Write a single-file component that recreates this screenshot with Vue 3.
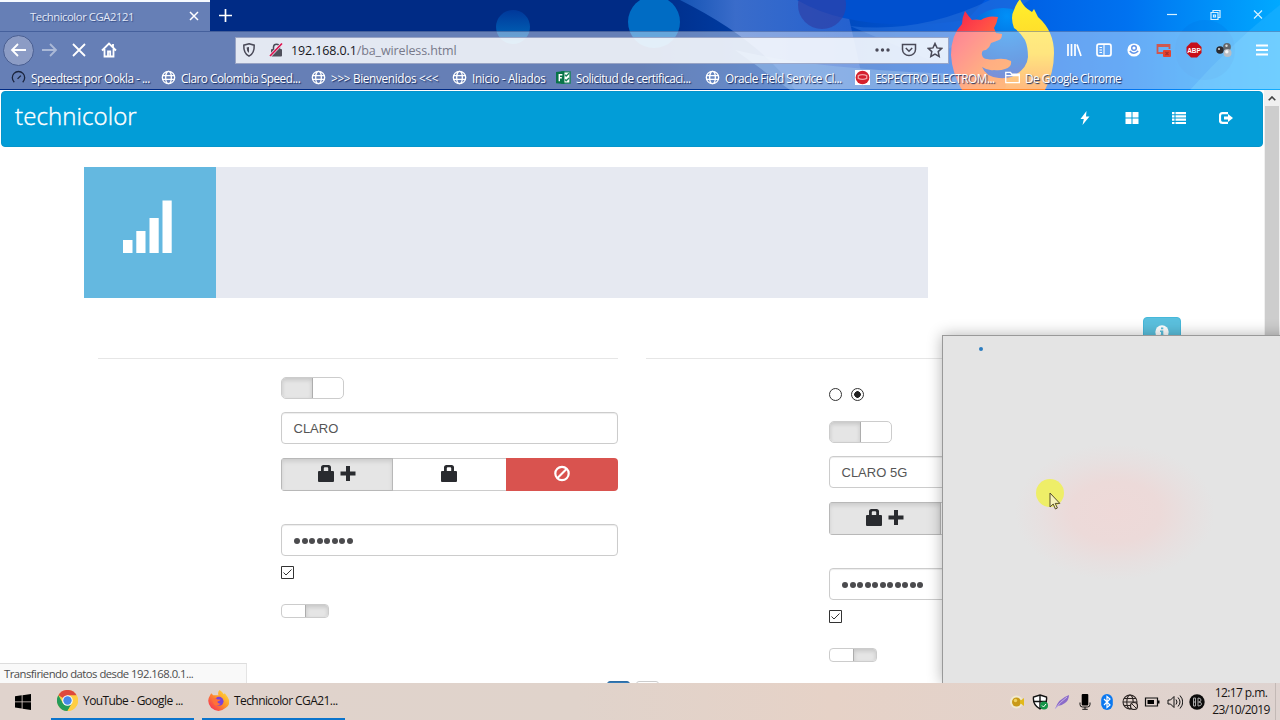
<template>
  <div class="desktop">
    <header class="browser">
      <svg class="wallpaper" viewBox="0 0 1280 90" aria-hidden="true">
        <defs>
          <linearGradient id="sky" x1="0" y1="0" x2="1" y2="0">
            <stop offset="0" stop-color="#002b85" />
            <stop offset=".5" stop-color="#002b85" />
            <stop offset=".62" stop-color="#0045b2" />
            <stop offset=".76" stop-color="#0058df" />
            <stop offset=".88" stop-color="#0072f0" />
            <stop offset="1" stop-color="#00a9ff" />
          </linearGradient>
          <linearGradient id="beam" x1="0" y1="0" x2="1" y2="0">
            <stop offset="0" stop-color="#1554b4" />
            <stop offset=".3" stop-color="#3a6cca" />
            <stop offset="1" stop-color="#2260d0" />
          </linearGradient>
          <linearGradient id="bubble" x1="0" y1="0" x2="0" y2="1">
            <stop offset="0" stop-color="#00389a" />
            <stop offset="1" stop-color="#006cbc" />
          </linearGradient>
          <linearGradient id="body" x1="0" y1="0" x2="1" y2="1">
            <stop offset="0" stop-color="#f3204b" />
            <stop offset=".3" stop-color="#ff4a48" />
            <stop offset=".6" stop-color="#ff7a30" />
            <stop offset="1" stop-color="#ff8f24" />
          </linearGradient>
          <linearGradient id="tail" x1="0" y1="0" x2="0" y2="1">
            <stop offset="0" stop-color="#fff02c" />
            <stop offset=".6" stop-color="#ffd42b" />
            <stop offset="1" stop-color="#ff8a2c" />
          </linearGradient>
          <radialGradient id="globe" cx=".55" cy=".1" r=".95">
            <stop offset="0" stop-color="#0090f8" />
            <stop offset=".6" stop-color="#075bd0" />
            <stop offset="1" stop-color="#4530a8" />
          </radialGradient>
        </defs>
        <rect width="1280" height="90" fill="url(#sky)" />
        <path d="M680 0h165l20 90H795Q760 40 680 0z" fill="url(#beam)" />
        <path d="M735 50q90 22 260 25v15H790z" fill="#4f8ed8" opacity=".6" />
        <path d="M797 0q60 35 170 20L985 0z" fill="#0050cf" />
        <path d="M850 26q70 8 140-26h40L930 60z" fill="#2a72dc" opacity=".5" />
        <path d="M1190 90q45-50 90-85v85z" fill="#22b2ff" opacity=".5" />
        <circle cx="513" cy="27" r="17" fill="url(#bubble)" />
        <circle cx="654" cy="22" r="26" fill="#006cc4" />
        <circle cx="822" cy="5" r="24" fill="#2d40a8" opacity=".7" />
        <circle cx="1205" cy="50" r="30" fill="#0068d8" opacity=".15" />
        <circle cx="1003" cy="49" r="41" fill="url(#globe)" />
        <path
          d="M965 11q4 6 7 9 4-1 9 0 7-5 17-3-1 6-4 11l2 5 6 1q0 5-3 6-5 2-8 3-1 4-5 7-5 0-4 5 1 4 5 4 5 1 10 0 8-1 14 2 1 6-6 8-5 2-11 1-6 1-12-3 4 10 17 11 14 1 25-6v18h-62q-10-17-11-35 0-20 11-31 0-6 3-13z"
          fill="url(#body)"
        />
        <path
          d="M1020-1q3 8 12 13l2-3 4 8q16 14 16 36 0 20-9 37h-40l2-11q20-8 21-22 0-10-3-17-4-7-11-12-4-11 0-18 2-6 6-11z"
          fill="url(#tail)"
        />
      </svg>

      <div class="tab-strip">
        <div class="tab">
          <span class="tab-title">Technicolor CGA2121</span>
          <svg class="tab-close" viewBox="0 0 10 10"><path d="M1 1l8 8M9 1L1 9" /></svg>
        </div>
        <svg class="tab-new" viewBox="0 0 13 13"><path d="M6.500 0v13M0 6.500h13" /></svg>
        <div class="window-controls">
          <svg viewBox="0 0 12 12"><path d="M1 5.500h10" /></svg>
          <svg viewBox="0 0 12 12"><path d="M2 3.500h7v7H2zM4 3V1.500h7v7H9.500M4.500 6h2v2h-2z" /></svg>
          <svg viewBox="0 0 12 12"><path d="M2 1.500l8 8M10 1.500l-8 8" /></svg>
        </div>
      </div>

      <div class="nav-bar">
        <button class="nav-back" type="button">
          <svg viewBox="0 0 18 18"><path d="M16 9H2M8 3L2 9l6 6" /></svg>
        </button>
        <svg class="nav-icon nav-icon--dim" viewBox="0 0 18 18"><path d="M2 9h14M10 3l6 6-6 6" /></svg>
        <svg class="nav-icon" viewBox="0 0 18 18"><path d="M3 3l12 12M15 3L3 15" /></svg>
        <svg class="nav-icon" viewBox="0 0 18 18">
          <path d="M2 9.500l7-7 7 7M4.500 8v7.500h9V8M8 15v-4.500h2.200V15M13 3v3" />
        </svg>
        <div class="url-bar">
          <svg class="url-icon" viewBox="0 0 16 16">
            <path d="M8 1.800l5.200 1.400q.4 8-5.200 11-5.600-3-5.200-11z" />
            <path d="M8 5v6q-2.500-2-2.400-5.500z" fill="#4a4a58" stroke="none" />
          </svg>
          <svg class="url-icon" viewBox="0 0 16 16">
            <rect x="3" y="7" width="11" height="7.500" rx="1" fill="#50505c" stroke="none" />
            <path d="M5.500 7V5q.2-2.700 3-2.700T11.500 5v2" />
            <path d="M2 14L14 1.500" stroke="#eceff8" stroke-width="3" />
            <path d="M2 14L14 1.500" stroke="#dc1450" stroke-width="1.800" />
          </svg>
          <span class="url-text">192.168.0.1<em>/ba_wireless.html</em></span>
          <svg class="url-icon" viewBox="0 0 16 16">
            <g fill="#4a4a58" stroke="none">
              <circle cx="3" cy="8" r="1.700" /><circle cx="8.500" cy="8" r="1.700" /><circle cx="14" cy="8" r="1.700" />
            </g>
          </svg>
          <svg class="url-icon" viewBox="0 0 16 16">
            <path d="M1.500 2.500h13v5a6.500 6 0 0 1-13 0zM4.800 6L8 9.200 11.200 6" />
          </svg>
          <svg class="url-icon" viewBox="0 0 16 16">
            <path d="M8 1.500l2 4.400 4.700.5-3.500 3.200 1 4.800L8 12l-4.200 2.400 1-4.800L1.300 6.400 6 5.900z" />
          </svg>
        </div>
        <div class="toolbar-icons">
          <svg viewBox="0 0 16 16"><path d="M2 2v12M5.500 2v12M9 2v12M11 2.500l4 11.500" stroke-width="1.700" /></svg>
          <svg viewBox="0 0 16 16">
            <rect x="1" y="2.200" width="14" height="11.600" rx="2" stroke-width="1.700" />
            <path d="M8 2.500v11M3.500 5.500h2.500M3.500 8h2.500M3.500 10.500h2.500" />
          </svg>
          <svg viewBox="0 0 16 16">
            <circle cx="8" cy="8" r="6.600" fill="#fff" stroke="none" />
            <circle cx="8" cy="6" r="2.300" fill="#fff" stroke="#5f92e8" stroke-width="1.400" />
            <path d="M3.800 9q4 4.500 8.400 0" stroke="#5f92e8" stroke-width="1.500" />
          </svg>
          <svg viewBox="0 0 16 16">
            <path d="M7 11H1.500V3h12v4M1.500 4h12" stroke="#d0584f" stroke-width="1.800" />
            <rect x="7" y="8" width="8" height="7" rx="1" fill="#e5432f" stroke="none" />
            <path d="M9.500 10l3 3M12.500 10l-3 3" stroke="#a8302e" />
          </svg>
          <svg viewBox="0 0 16 16">
            <path d="M5 .5h6L15.500 5v6L11 15.500H5L.5 11V5z" fill="#c70d18" stroke="none" />
            <text x="8" y="10.600" text-anchor="middle">ABP</text>
          </svg>
          <svg viewBox="0 0 16 16">
            <g stroke="none">
              <circle cx="11" cy="5" r="3.900" fill="#63676c" />
              <circle cx="4" cy="8" r="3.800" fill="#2b2b31" />
              <circle cx="11.500" cy="11" r="4" fill="#b9bdc4" />
              <circle cx="3" cy="7" r="1" fill="#ddd" /><circle cx="10.500" cy="3.800" r="1.200" fill="#ddd" />
              <circle cx="10.800" cy="9.800" r="1.700" fill="#f4f5f6" />
            </g>
          </svg>
        </div>
        <svg class="menu-icon" viewBox="0 0 12 12"><path d="M0 1.500h12M0 6h12M0 10.500h12" /></svg>
      </div>

      <nav class="bookmarks">
        <a v-for="mark in bookmarks" :key="mark.label" class="bookmark">
          <svg v-if="mark.icon === 'globe'" viewBox="0 0 16 16">
            <circle cx="8" cy="8" r="6.600" />
            <path d="M1.500 6h13M1.500 10h13" />
            <ellipse cx="8" cy="8" rx="3" ry="6.600" />
          </svg>
          <svg v-else-if="mark.icon === 'gauge'" viewBox="0 0 16 16" class="icon-gauge">
            <path d="M3.500 13a6.600 6.600 0 1 1 9 0M7 9.500L10.500 6" />
          </svg>
          <svg v-else-if="mark.icon === 'forms'" viewBox="0 0 16 16">
            <path d="M6 2h9v12H6z" fill="#fff" stroke="#168358" stroke-width="1.500" />
            <path d="M9.500 5l1.300 1.500L14 3.500M9.500 10l1.300 1.500L14 8.500" stroke="#168358" />
            <path d="M0 2l9-1v14l-9-1z" fill="#087448" stroke="none" />
            <path d="M3.500 12V5h3.300M3.500 8.300h2.700" stroke-width="1.500" />
          </svg>
          <svg v-else-if="mark.icon === 'badge'" viewBox="0 0 16 16">
            <path d="M0 0h16v16H0z" fill="#fff" stroke="none" />
            <circle cx="8" cy="8" r="7.300" fill="#d5212d" stroke="none" />
            <path d="M3.500 6q4.500-2 9 0v3q-4.500 2-9 0z" stroke="#f2a3a5" />
          </svg>
          <svg v-else viewBox="0 0 16 16"><path d="M.8 13.500v-11h5l1.500 2h8v9zM.8 6h14.400" /></svg>
          <span>{{ mark.label }}</span>
        </a>
      </nav>
    </header>

    <div class="viewport">
      <div class="page">
        <div class="brand-bar">
          <span class="brand">technicolor</span>
          <div class="brand-icons">
            <svg viewBox="0 0 14 14"><path d="M8.500 0L2.500 8h3.300L4.500 14 11.500 5.500H8z" /></svg>
            <svg viewBox="0 0 14 14"><path d="M.5 1h6v5.500h-6zM7.500 1h6v5.500h-6zM.5 7.500h6V13h-6zM7.500 7.500h6V13h-6z" /></svg>
            <svg viewBox="0 0 14 14">
              <path d="M0 1h2.500v2.200H0zM3.500 1H14v2.200H3.500zM0 4.300h2.500v2.200H0zM3.500 4.300H14v2.200H3.500zM0 7.600h2.500v2.200H0zM3.500 7.600H14v2.200H3.500zM0 10.900h2.500V13H0zM3.500 10.900H14V13H3.500z" />
            </svg>
            <svg viewBox="0 0 14 14">
              <path d="M9 2.200H3.500Q1 2.200 1 4.700v4.600q0 2.500 2.500 2.500H9" fill="none" stroke="#fff" stroke-width="2.200" />
              <path d="M5 5.500h4V3l5 4-5 4V8.500H5z" />
            </svg>
          </div>
        </div>

        <div class="banner">
          <div class="banner-icon">
            <svg viewBox="0 0 50 54"><path d="M0 40h9.500v13H0zM13.300 31h9.200v22h-9.200zM26.500 18h9.200v35h-9.200zM39.500.500h9.200V53h-9.200z" /></svg>
          </div>
        </div>

        <div class="info-row">
          <button class="info-btn" type="button">
            <svg viewBox="0 0 14 14">
              <circle cx="7" cy="7" r="6.700" fill="#fff" />
              <path d="M6 2.500h2.300v1.800H6zM5 5.500h3.300v4.300h1v1.400H5V9.800h1V7H5z" fill="#5bc0de" />
            </svg>
          </button>
        </div>

        <div class="bands">
          <section v-for="band in bands" :key="band.ssid" class="band">
            <div class="band-form">
              <div v-if="band.radios" class="radios">
                <span class="radio" /><span class="radio radio--on" />
              </div>
              <div class="switch"><span class="pressed" /><span /></div>
              <div class="field">{{ band.ssid }}</div>
              <div class="security">
                <span class="pressed">
                  <svg class="lock" viewBox="0 0 16 17"><path :d="lockPath" fill-rule="evenodd" /></svg>
                  <svg class="plus" viewBox="0 0 16 16"><path d="M6 .5h4V6h5.500v4H10v5.500H6V10H.5V6H6z" /></svg>
                </span>
                <span><svg class="lock" viewBox="0 0 16 17"><path :d="lockPath" fill-rule="evenodd" /></svg></span>
                <span class="danger">
                  <svg class="ban" viewBox="0 0 16 16"><circle cx="8" cy="8" r="6.700" /><path d="M3.500 12.500l9-9" /></svg>
                </span>
              </div>
              <div class="field field--password"><i v-for="n in band.dots" :key="n" /></div>
              <svg class="checkbox" viewBox="0 0 13 13"><path d="M.5.500h12v12H.5zM2.500 6.500L5 9l5.500-5.500" /></svg>
              <div class="switch switch--small"><span /><span class="pressed" /></div>
            </div>
          </section>
        </div>
        <div class="actions"><span class="primary" /><span /></div>
      </div>
      <div class="scrollbar">
        <svg viewBox="0 0 8 5"><path d="M.7 4.300L4 1l3.300 3.300" /></svg>
        <div class="thumb" />
      </div>
    </div>

    <div class="status">Transfiriendo datos desde 192.168.0.1...</div>
    <div class="popup"><span class="popup-dot" /></div>
    <div class="pointer">
      <svg viewBox="0 0 12 18"><path d="M1 1v14l3.200-3 2.200 5 2-1-2.200-4.600h4.600z" /></svg>
    </div>

    <footer class="taskbar">
      <svg class="start" viewBox="0 0 16 16"><path d="M0 2.300l6.700-1v6.200H0zM7.500 1.200L16 0v7.500H7.500zM0 8.300h6.700v6.200L0 13.600zM7.500 8.300H16V16l-8.500-1.200z" /></svg>
      <div class="task">
        <svg viewBox="0 0 20 20">
          <circle cx="10" cy="10" r="10" fill="#ffce43" />
          <path d="M10 10L1.300 5A10 10 0 0 1 18.700 5z" fill="#df493c" />
          <path d="M1.300 5A10 10 0 0 0 10 20l4.300-7.500L10 10 5.700 12.500z" fill="#249b59" />
          <path d="M18.700 5H10v5l4.300 2.500L10 20A10 10 0 0 0 18.700 5z" fill="#ffce43" />
          <circle cx="10" cy="10" r="5" fill="#fff" /><circle cx="10" cy="10" r="4" fill="#4688e8" />
        </svg>
        <span>YouTube - Google ...</span>
      </div>
      <div class="task">
        <svg viewBox="0 0 20 20">
          <defs>
            <linearGradient id="fx" x1="1" y1="0" x2="0" y2="1">
              <stop offset="0" stop-color="#fff043" /><stop offset=".45" stop-color="#ff9826" />
              <stop offset="1" stop-color="#f51c60" />
            </linearGradient>
          </defs>
          <path d="M11 0q3 2 4 4l1-1q8 9 1 14-7 6-14 0-5-6-1-12l1-2 2 2 3 0 2 0q-1-3 1-5z" fill="url(#fx)" />
          <circle cx="10.500" cy="10.800" r="4.300" fill="#7a43d8" />
          <path d="M4 8q3-1 5 1l3 0q-1 2-3 2 0 2 3 2-3 3-6 1-2-2-2-6z" fill="#ff7139" />
        </svg>
        <span>Technicolor CGA21...</span>
      </div>
      <div class="tray">
        <svg viewBox="0 0 16 16"><circle cx="7.500" cy="8" r="6.500" fill="#f1ead0" /><circle cx="7.500" cy="8" r="4.500" fill="#c99a16" /><circle cx="6.500" cy="6.500" r="1.700" fill="#efd260" /><path d="M11 7l4-3v8l-4-3z" fill="#e2b91a" /></svg>
        <svg viewBox="0 0 16 16">
          <path d="M8 1l6.500 2q1 8-6.500 12Q.5 11 1.500 3z" fill="#fff" stroke="#111" stroke-width="1.400" />
          <path d="M8 1v14M1.500 7.500h13" stroke="#111" stroke-width="1.400" />
          <circle cx="12" cy="11.500" r="4" fill="#159447" /><path d="M10 11.500l1.500 1.500 2.500-3" fill="none" stroke="#fff" />
        </svg>
        <svg viewBox="0 0 16 16"><path d="M1 15Q4 5 15 1q0 5-4 8t-7 3z" fill="#8b6bc9" /><path d="M1 15Q6 8 13 3" fill="none" stroke="#c8b4e4" /></svg>
        <svg viewBox="0 0 16 16"><rect x="4.700" y="0" width="6.600" height="11.500" rx="1" /><path d="M3 8.500v2q0 2.500 2.500 2.500h5q2.500 0 2.500-2.500v-2M8 13v2.300M5.300 15.300h5.400" fill="none" stroke="#111" /></svg>
        <svg viewBox="0 0 16 16"><rect x="2.200" y="0" width="11.600" height="16" rx="5.800" fill="#0a78f0" /><path d="M5 5l6 6-3 2.500v-11L11 5l-6 6" fill="none" stroke="#fff" stroke-width="1.200" /></svg>
        <svg viewBox="0 0 16 16">
          <g fill="none" stroke="#2b2422" stroke-width="1.100"><circle cx="8" cy="8" r="7" /><ellipse cx="8" cy="8" rx="3.200" ry="7" /><path d="M1 8h14M2 4.500h12M2 11.500h12" /></g>
          <circle cx="12" cy="12" r="3.500" fill="#e1d3cd" stroke="#2b2422" stroke-width="1.200" /><path d="M9.700 9.700l4.600 4.600" stroke="#2b2422" />
        </svg>
        <svg viewBox="0 0 16 16"><path d="M1.500 4h12v8h-12z" fill="none" stroke="#111" stroke-width="1.200" /><path d="M3.500 6h6.500v4H3.500zM14 6.500h1.500v3H14z" /></svg>
        <svg viewBox="0 0 16 16"><path d="M1 6h2.500L7 2.500v11L3.500 10H1zM9 5.500q2 2.500 0 5M11 3.500q4 4.500 0 9M13 1.500q5.500 6.500 0 13" fill="none" stroke="#111" /></svg>
        <svg viewBox="0 0 16 16"><circle cx="8" cy="8" r="7.700" fill="#0d0c0c" /><path d="M4.500 4v8M4.500 4h2v8h-2M4.500 8h2M9 4v8M9 4q3 0 3 2T9.500 8q3 0 3 2T9 12" fill="none" stroke="#bbb" stroke-width=".9" /></svg>
      </div>
      <div class="clock"><span>12:17 p.m.</span><span>23/10/2019</span></div>
      <div class="show-desktop" />
    </footer>
  </div>
</template>

<script setup>
const bookmarks = [
  { icon: 'gauge', label: 'Speedtest por Ookla - ...' },
  { icon: 'globe', label: 'Claro Colombia Speed...' },
  { icon: 'globe', label: '>>> Bienvenidos <<<' },
  { icon: 'globe', label: 'Inicio - Aliados' },
  { icon: 'forms', label: 'Solicitud de certificaci...' },
  { icon: 'globe', label: 'Oracle Field Service Cl...' },
  { icon: 'badge', label: 'ESPECTRO ELECTROM...' },
  { icon: 'folder', label: 'De Google Chrome' },
]

const bands = [
  { ssid: 'CLARO', dots: 8, radios: false },
  { ssid: 'CLARO 5G', dots: 11, radios: true },
]

const lockPath =
  'M1 6h2V2.500Q3 0 5.500 0h5Q13 0 13 2.500V6h2q1 0 1 1v9q0 1-1 1H1q-1 0-1-1V7q0-1 1-1zM5.800 6h4.400V3.300q0-1-1-1H6.800q-1 0-1 1z'
</script>

<style>
body {
  overflow: hidden;
}
</style>

<style scoped>
.desktop {
  position: relative;
  display: flex;
  flex-direction: column;
  width: 1280px;
  height: 720px;
  overflow: hidden;
  background: #fff;
  font-family: 'Open Sans', 'Noto Sans', sans-serif;
  font-size: 12px;
}

.desktop * {
  box-sizing: border-box;
}

svg {
  display: block;
  flex: none;
}

/* browser chrome */
.browser {
  position: relative;
  height: 90px;
  flex: none;
  border-bottom: 1px solid #063b8d;
}

.wallpaper {
  position: absolute;
  top: 0;
  left: 0;
  width: 1280px;
  height: 90px;
}

.tab-strip,
.nav-bar,
.bookmarks {
  position: relative;
  display: flex;
  align-items: center;
  color: #fff;
}

.tab-strip {
  height: 31px;
}

.tab {
  display: flex;
  align-items: center;
  justify-content: space-between;
  width: 210px;
  height: 31px;
  padding: 0 11px 1px 30px;
  border-top: 2px solid #f6faff;
  background: rgba(255, 255, 255, 0.4);
}

.tab-title {
  font-size: 11.3px;
  letter-spacing: -0.44px;
  color: #e3e9f7;
  text-shadow: 1px 1px 1px #354d87;
}

.tab-close {
  width: 10px;
  height: 10px;
  stroke: #fff;
  stroke-width: 1.5;
}

.tab-new {
  width: 13px;
  height: 13px;
  margin-left: 9px;
  stroke: #fff;
  stroke-width: 1.7;
}

.window-controls {
  display: flex;
  gap: 31px;
  margin-left: auto;
  padding: 0 16px 1px 0;
}

.window-controls svg {
  width: 12px;
  height: 12px;
  fill: none;
  stroke: #d6f1ff;
  stroke-width: 1.2;
}

.nav-bar {
  height: 37px;
  padding: 0 12px 0 3px;
  border-top: 1px solid rgba(10, 40, 110, 0.35);
  background: rgba(255, 255, 255, 0.4);
}

.nav-back {
  display: flex;
  align-items: center;
  justify-content: center;
  width: 31px;
  height: 31px;
  padding: 0;
  border: 1px solid #4a5f92;
  border-radius: 50%;
  background: #8c9cc5;
}

.nav-back svg {
  width: 18px;
  height: 18px;
}

.nav-back svg,
.nav-icon {
  fill: none;
  stroke: #fff;
  stroke-width: 1.8;
}

.nav-icon {
  width: 18px;
  height: 18px;
  margin-left: 12px;
}

.nav-icon--dim {
  width: 18px;
  margin-left: 6px;
  opacity: 0.45;
}

.url-bar {
  display: flex;
  align-items: center;
  gap: 10.5px;
  width: 714px;
  height: 27px;
  margin-left: 117px;
  padding: 0 5px;
  border: 1px solid rgba(60, 80, 140, 0.45);
  background: rgba(255, 255, 255, 0.82);
}

.url-icon {
  width: 16px;
  height: 16px;
  fill: none;
  stroke: #4a4a58;
  stroke-width: 1.5;
}

.url-text {
  flex: 1;
  margin-left: -3px;
  font-size: 12.5px;
  letter-spacing: -0.12px;
  color: #15161c;
}

.url-text em {
  font-style: normal;
  color: #77798a;
}

.toolbar-icons {
  display: flex;
  gap: 14px;
  margin-left: 117px;
}

.toolbar-icons svg {
  width: 16px;
  height: 16px;
  fill: none;
  stroke: #fff;
  stroke-width: 1.1;
}

.toolbar-icons text {
  font: bold 6.5px 'Liberation Sans', sans-serif;
  fill: #fff;
  stroke: none;
}

.menu-icon {
  width: 12px;
  height: 12px;
  margin-left: auto;
  stroke: #fff;
  stroke-width: 1.8;
}

.bookmarks {
  display: grid;
  grid-template-columns: 150px 150px 141px 104px 149px 150px 150px auto;
  height: 21px;
  padding: 0 0 2px 11px;
  background: rgba(255, 255, 255, 0.4);
}

.bookmark {
  display: flex;
  align-items: center;
  gap: 5px;
  white-space: nowrap;
  letter-spacing: -0.5px;
  font-size: 11.8px;
  text-shadow: 1px 1px 1px #172d63;
}

.bookmark:nth-child(3),
.bookmark:nth-child(4) {
  letter-spacing: -0.35px;
}

.bookmark svg {
  width: 15px;
  height: 15px;
  fill: none;
  stroke: #fff;
  stroke-width: 1.4;
}

.bookmark .icon-gauge {
  stroke: #19233d;
}

/* router page */
.viewport {
  display: flex;
  flex: 1;
  min-height: 0;
  overflow: hidden;
}

.page {
  flex: 1;
  min-width: 0;
  padding: 1px 1px 0;
  font-family: 'Liberation Sans', Arial, sans-serif;
}

.brand-bar {
  display: flex;
  align-items: center;
  justify-content: space-between;
  height: 56px;
  padding: 0 29px 2px 13px;
  border: 1px solid #0595cb;
  border-radius: 4px;
  background: #029dd7;
}

.brand {
  margin-top: -5px;
  font-family: 'Open Sans', sans-serif;
  font-size: 24px;
  font-weight: 300;
  letter-spacing: 0.1px;
  color: #fff;
  -webkit-text-stroke: 0.4px #fff;
}

.brand-icons {
  display: flex;
  gap: 33px;
}

.brand-icons svg {
  width: 14px;
  height: 14px;
  fill: #fff;
}

.banner {
  width: 844px;
  height: 131px;
  margin: 20px 0 0 83px;
  background: #e6e9f1;
}

.banner-icon {
  width: 132px;
  height: 131px;
  padding: 33px 0 0 39px;
  background: #64b8e0;
}

.banner-icon svg {
  width: 50px;
  height: 54px;
  fill: #fff;
}

.info-row {
  display: flex;
  justify-content: flex-end;
  height: 41px;
  margin-top: 19px;
  padding-right: 82px;
}

.info-btn {
  display: flex;
  align-items: flex-start;
  justify-content: center;
  width: 38px;
  height: 34px;
  padding: 7px 0 0;
  border: 1px solid #46b8da;
  border-radius: 4px;
  background: #5bc0de;
}

.info-btn svg {
  width: 14px;
  height: 14px;
}

.bands {
  display: grid;
  grid-template-columns: 520px 520px;
  gap: 28px;
  height: 323px;
  padding-left: 97px;
}

.band {
  border-top: 1px solid #e6e6e6;
  padding: 18px 0 0 183px;
}

.band-form {
  display: flex;
  flex-direction: column;
  align-items: flex-start;
  width: 337px;
}

.radios {
  display: flex;
  gap: 9px;
  height: 44px;
  padding-top: 11px;
}

.radio {
  width: 13px;
  height: 13px;
  border: 1px solid #333;
  border-radius: 50%;
}

.radio--on {
  background: radial-gradient(circle, #222 3px, transparent 3.6px);
}

.switch {
  display: flex;
  width: 63px;
  height: 22px;
  border: 1px solid #ccc;
  border-radius: 5px;
  overflow: hidden;
}

.switch span {
  flex: 1;
}

.pressed {
  background: #e5e5e5;
  box-shadow: inset 0 0 0 1px #b8b8b8, inset 0 3px 5px rgba(0, 0, 0, 0.13);
}

.switch .pressed {
  box-shadow: inset 0 2px 4px rgba(0, 0, 0, 0.14);
  border-right: 1px solid #adadad;
}

.field {
  display: flex;
  align-items: center;
  width: 337px;
  height: 32px;
  margin-top: 13px;
  padding: 0 11.5px;
  border: 1px solid #ccc;
  border-radius: 4px;
  box-shadow: inset 0 1px 1px rgba(0, 0, 0, 0.075);
  font-size: 13px;
  color: #555;
}

.field--password {
  gap: 1.5px;
  margin-top: 33px;
  padding: 2px 12px 0;
}

.field--password i {
  width: 6px;
  height: 6px;
  border-radius: 50%;
  background: #4b4b4e;
}

.security {
  display: flex;
  width: 337px;
  height: 33px;
  margin-top: 14px;
  border-radius: 4px;
  overflow: hidden;
}

.security > span {
  display: flex;
  flex: 1;
  align-items: center;
  justify-content: center;
  gap: 6px;
  padding: 0 1px 2px 0;
}

.security > span:nth-child(2) {
  padding-right: 2px;
  border: solid #ccc;
  border-width: 1px 0;
}

.security svg {
  width: 16px;
  height: 17px;
  fill: #292b2f;
}

.security .danger {
  background: #d9534f;
}

.security .ban {
  fill: none;
  stroke: #fff;
  stroke-width: 2.2;
}

.checkbox {
  width: 13px;
  height: 13px;
  margin-top: 10px;
  fill: none;
  stroke: #333;
}

.switch--small {
  width: 48px;
  height: 14px;
  margin-top: 25px;
  border-radius: 4px;
}

.switch--small .pressed {
  border-right: none;
  border-left: 1px solid #adadad;
}

.actions {
  display: flex;
  gap: 6px;
  padding-left: 606px;
}

.actions span {
  width: 23px;
  height: 20px;
  border: 1px solid #ccc;
  border-radius: 3px;
}

.actions .primary {
  border-color: #2e6da4;
  background: #337ab7;
}

.scrollbar {
  width: 16px;
  padding: 6px 1px 0;
  background: #f0f0f0;
}

.scrollbar svg {
  width: 8px;
  height: 5px;
  margin-left: 3px;
  fill: none;
  stroke: #444;
  stroke-width: 1.6;
}

.thumb {
  height: 400px;
  margin-top: 5px;
  background: #cdcdcd;
}

/* layers over the page */
.status {
  position: absolute;
  left: 0;
  top: 663px;
  width: 247px;
  height: 20px;
  padding-left: 4px;
  border-top: 1px solid #ddd;
  border-right: 1px solid #e4e4e4;
  background: #f9f9f9;
  font-size: 11.3px;
  line-height: 20px;
  letter-spacing: -0.52px;
  color: #4c4c4c;
}

.popup {
  position: absolute;
  left: 942px;
  top: 335px;
  width: 360px;
  height: 348px;
  border: 1px solid #999;
  border-bottom: none;
  background: radial-gradient(ellipse 100px 68px at 172px 176px, #eed9d8 0, #ecdad9 45%, #e7e0e0 75%, #e4e4e4 100%);
  box-shadow: 0 0 14px rgba(0, 0, 0, 0.3);
}

.popup-dot {
  position: absolute;
  left: 36px;
  top: 11px;
  width: 4px;
  height: 4px;
  border-radius: 50%;
  background: #2b7cc0;
}

.pointer {
  position: absolute;
  left: 1036px;
  top: 479px;
  width: 28px;
  height: 28px;
  border-radius: 50%;
  background: #eeee68;
}

.pointer svg {
  width: 12px;
  height: 18px;
  margin: 13px 0 0 13px;
  fill: #f6f2bc;
  stroke: #554c2c;
}

/* taskbar */
.taskbar {
  position: relative;
  display: flex;
  align-items: center;
  height: 37px;
  flex: none;
  background: linear-gradient(90deg, #e0d3cd 0, #e0d3cb 45%, #e6d2c7 65%, #ded3d0 100%);
}

.start {
  width: 16px;
  height: 16px;
  margin: 0 20px 0 15px;
}

.task {
  display: flex;
  align-items: center;
  gap: 5px;
  width: 143px;
  height: 37px;
  margin-right: 8px;
  padding-left: 6px;
  border-bottom: 2px solid #0b74cc;
  font-size: 12px;
  letter-spacing: -0.58px;
  white-space: nowrap;
  color: #161312;
}

.task svg {
  width: 21px;
  height: 21px;
}

.tray {
  display: flex;
  gap: 6.5px;
  margin-left: auto;
  margin-right: 6px;
}

.tray svg {
  width: 16px;
  height: 16px;
}

.clock {
  display: flex;
  flex-direction: column;
  align-items: center;
  width: 60px;
  margin-right: 4px;
  padding-bottom: 2px;
  line-height: 17px;
  letter-spacing: -0.6px;
  white-space: nowrap;
  color: #191514;
}

.show-desktop {
  width: 5px;
  height: 37px;
  border-left: 1px solid #c3b9b6;
}
</style>
